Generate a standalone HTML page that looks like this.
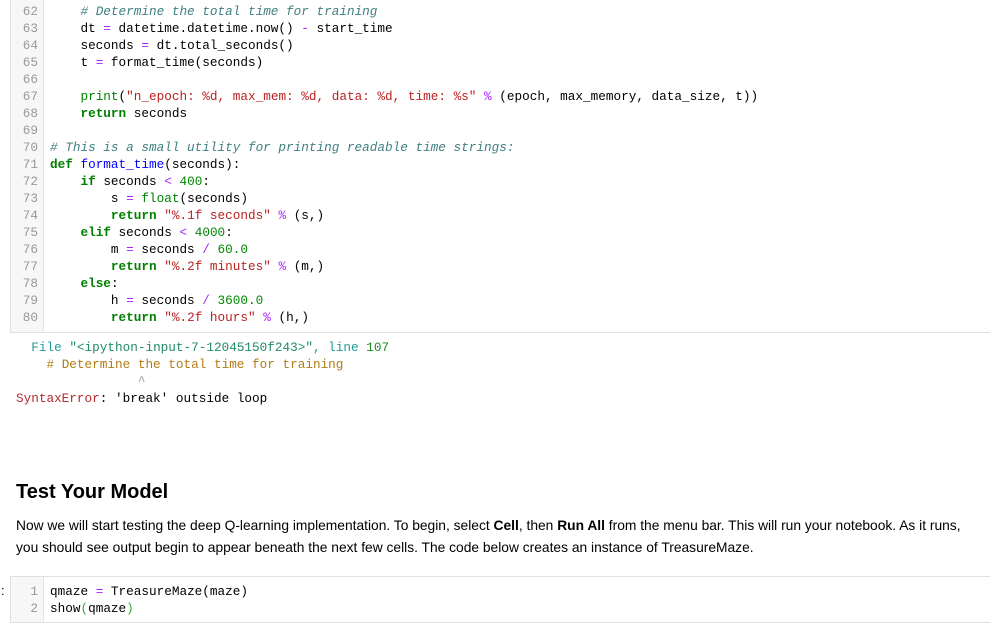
<!DOCTYPE html>
<html><head><meta charset="utf-8"><style>
body{margin:0;width:990px;height:630px;overflow:hidden;background:#fff;font-family:"Liberation Sans",Arial,sans-serif;position:relative}
.cell{position:absolute;left:10px;right:-2px;border:1px solid #e0e0e0;background:#fff}
.gut{position:absolute;left:0;top:0;bottom:0;width:32px;border-right:1px solid #e6e6e6;background:#f7f7f7}
pre{margin:0;font-family:"Liberation Mono",monospace;font-size:12.7px;line-height:17px;color:#000}
.ln{position:absolute;left:0;width:27px;text-align:right;color:#999}
.code{position:absolute;left:39px}
.c{color:#408080;font-style:italic}.k{color:#008000;font-weight:bold}.s{color:#ba2121}.n{color:#080}.o{color:#a2f}.b{color:#008000}
.err{position:absolute;left:16px;top:339px}
h2{position:absolute;left:16px;top:481px;margin:0;font-size:20px;font-weight:bold;color:#000}
p{position:absolute;left:16px;top:515px;margin:0;font-size:13.8px;line-height:22px;color:#000;width:970px}
</style></head><body>
<div class="cell" style="top:-3px;height:334px">
<div class="gut"></div>
<pre class="ln" style="top:5px">62
63
64
65
66
67
68
69
70
71
72
73
74
75
76
77
78
79
80</pre>
<pre class="code" style="top:5px">    <span class="c"># Determine the total time for training</span>
    dt <span class="o">=</span> datetime.datetime.now() <span class="o">-</span> start_time
    seconds <span class="o">=</span> dt.total_seconds()
    t <span class="o">=</span> format_time(seconds)

    <span class="b">print</span>(<span class="s">"n_epoch: %d, max_mem: %d, data: %d, time: %s"</span> <span class="o">%</span> (epoch, max_memory, data_size, t))
    <span class="k">return</span> seconds

<span class="c"># This is a small utility for printing readable time strings:</span>
<span class="k">def</span> <span style="color:#00f">format_time</span>(seconds):
    <span class="k">if</span> seconds <span class="o">&lt;</span> <span class="n">400</span>:
        s <span class="o">=</span> <span class="b">float</span>(seconds)
        <span class="k">return</span> <span class="s">"%.1f seconds"</span> <span class="o">%</span> (s,)
    <span class="k">elif</span> seconds <span class="o">&lt;</span> <span class="n">4000</span>:
        m <span class="o">=</span> seconds <span class="o">/</span> <span class="n">60.0</span>
        <span class="k">return</span> <span class="s">"%.2f minutes"</span> <span class="o">%</span> (m,)
    <span class="k">else</span>:
        h <span class="o">=</span> seconds <span class="o">/</span> <span class="n">3600.0</span>
        <span class="k">return</span> <span class="s">"%.2f hours"</span> <span class="o">%</span> (h,)</pre>
</div>
<pre class="err">  <span style="color:#1f9a9a">File </span><span style="color:#208a6a">"&lt;ipython-input-7-12045150f243&gt;"</span><span style="color:#1f9a9a">, line </span><span style="color:#208a20">107</span>
    <span style="color:#b27d12"># Determine the total time for training</span>
                <span style="color:#999">^</span>
<span style="color:#b22b31">SyntaxError</span>: 'break' outside loop</pre>
<h2>Test Your Model</h2>
<p>Now we will start testing the deep Q-learning implementation. To begin, select <b>Cell</b>, then <b>Run All</b> from the menu bar. This will run your notebook. As it runs, you should see output begin to appear beneath the next few cells. The code below creates an instance of TreasureMaze.</p>
<div style="position:absolute;left:1px;top:583px;font-size:13px;color:#000">:</div>
<div class="cell" style="top:576px;height:45px">
<div class="gut"></div>
<pre class="ln" style="top:6px">1
2</pre>
<pre class="code" style="top:6px">qmaze <span class="o">=</span> TreasureMaze(maze)
show<span style="color:#3a3">(</span>qmaze<span style="color:#3a3">)</span></pre>
</div>
</body></html>
